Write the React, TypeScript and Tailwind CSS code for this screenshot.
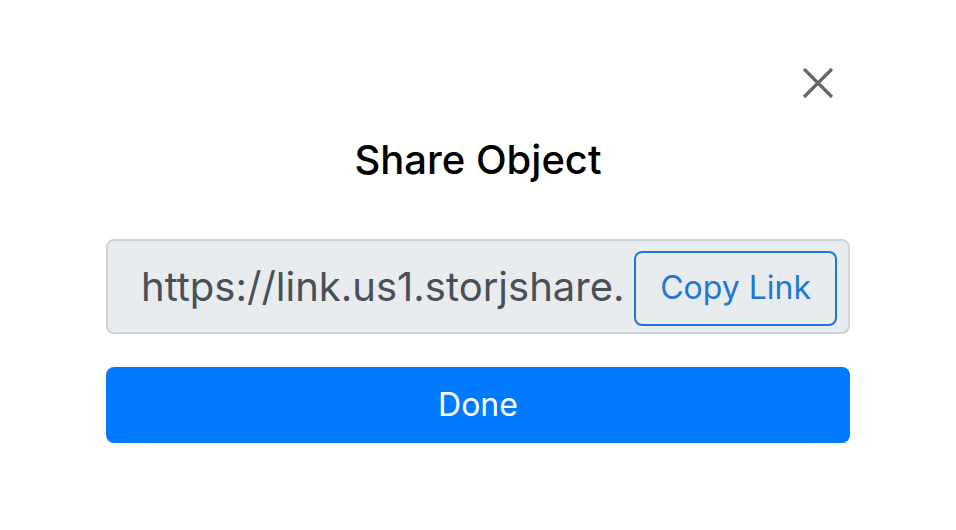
import React from 'react';

const App = () => {
  return (
    <div className="w-[956px] h-[530px] bg-white font-['Inter',sans-serif]">
      <div className="flex justify-end pt-[66px] pr-[121px]">
        <button className="w-[34px] h-[34px] flex items-center justify-center text-[#666]">
          <svg width="34" height="34" viewBox="0 0 34 34" fill="none" stroke="currentColor" strokeWidth="3.2">
            <path d="M3 3 L31 31 M31 3 L3 31" />
          </svg>
        </button>
      </div>
      <h2 className="mt-[40px] text-center text-[40px] font-medium text-black leading-none">Share Object</h2>
      <div className="mx-[106px] mt-[59px] flex flex-col gap-[33px]">
        <div className="h-[95px] flex items-center bg-[#e9ecef] border-2 border-[#ced4da] rounded-[8px] pl-[33px] pr-[11px]">
          <span className="flex-1 overflow-hidden whitespace-nowrap text-[40px] text-[#495057]">https://link.us1.storjshare.</span>
          <button className="mt-[3px] h-[75px] px-[24px] border-2 border-[#1f78d1] rounded-[8px] text-[32px] text-[#1f78d1] bg-[#e9ecef]">Copy Link</button>
        </div>
        <button className="h-[76px] bg-[#007bff] rounded-[8px] text-white text-[32px]">Done</button>
      </div>
    </div>
  );
};

export default App;
